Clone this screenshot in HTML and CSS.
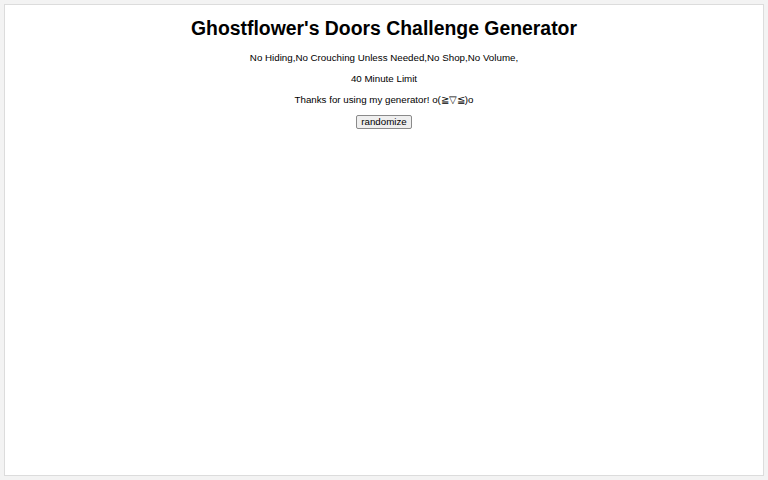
FILE: index.html
```html
<!DOCTYPE html>
<html>
<head>
<meta charset="utf-8">
<link rel="stylesheet" href="styles.css">
</head>
<body>
<div class="page">
  <h1 class="title">Ghostflower's Doors Challenge Generator</h1>
  <p class="line">No Hiding,No Crouching Unless Needed,No Shop,No Volume,</p>
  <p class="line">40 Minute Limit</p>
  <p class="line">Thanks for using my generator! o(≧▽≦)o</p>
  <button class="btn">randomize</button>
</div>
</body>
</html>
```
FILE: styles.css
```css
html, body { height: 100%; }
body {
  margin: 0;
  padding: 4px;
  box-sizing: border-box;
  background: #f3f3f3;
  font-family: "Liberation Sans", Arial, sans-serif;
}
.page {
  box-sizing: border-box;
  height: 100%;
  background: #fff;
  border: 1px solid #dcdcdc;
  display: flex;
  flex-direction: column;
  align-items: center;
  padding-top: 11px;
}
.title {
  font-size: 19.4px;
  line-height: 24px;
  font-weight: bold;
  margin: 0 0 12px;
  color: #000;
}
.line {
  font-size: 9.75px;
  margin: 0 0 9px;
  line-height: 12px;
  color: #000;
}
.btn {
  font-family: "Liberation Sans", Arial, sans-serif;
  font-size: 9.75px;
  line-height: 10px;
  padding: 1px 4px;
  margin: 0;
  border: 1px solid #8a8a8a;
  border-radius: 2px;
  background: #efefef;
  color: #000;
}
```
